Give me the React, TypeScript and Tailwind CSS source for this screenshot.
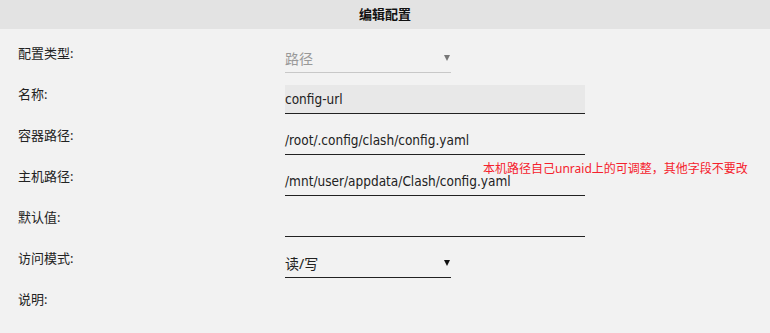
import React from 'react';

const font = { fontFamily: '"Noto Sans", "Noto Sans CJK SC", sans-serif' };
const inputFont = { fontFamily: '"DejaVu Sans Condensed", "Noto Sans CJK SC", sans-serif' };

function Arrow({ dim }: { dim?: boolean }) {
  return (
    <svg width="6" height="6" viewBox="0 0 6 6" className="mr-[1px]">
      <path d="M0 0 H6 L3 6 Z" fill={dim ? '#777' : '#111'} />
    </svg>
  );
}

function Row({ label, children }: { label: string; children?: React.ReactNode }) {
  return (
    <div className="flex items-start h-[41px]">
      <div className="w-[285px] pl-[18px] text-[13px] leading-[20px] text-[#222]">{label}:</div>
      {children}
    </div>
  );
}

export default function App() {
  return (
    <div className="w-[770px] h-[333px] bg-[#f2f2f2] overflow-hidden relative" style={font}>
      <div className="h-[29px] bg-[#e3e3e3] flex items-center justify-center text-[13px] font-bold text-[#111]">
        编辑配置
      </div>

      <div className="pt-[14px]">
        <Row label="配置类型">
          <div className="mt-[1px] w-[166px] h-[29px] border-b border-[#c8c8c8] flex items-center justify-between text-[14px] text-[#999]">
            <span>路径</span>
            <Arrow dim />
          </div>
        </Row>
        <Row label="名称">
          <div className="mt-[1px] w-[300px] h-[29px] bg-[#e8e8e8] border-b border-[#222] flex items-center text-[13.5px] text-[#222]" style={inputFont}>
            config-url
          </div>
        </Row>
        <Row label="容器路径">
          <div className="mt-[1px] w-[300px] h-[29px] border-b border-[#222] flex items-center text-[13.5px] text-[#222]" style={inputFont}>
            /root/.config/clash/config.yaml
          </div>
        </Row>
        <Row label="主机路径">
          <div className="mt-[1px] w-[300px] h-[29px] border-b border-[#222] flex items-center text-[13.5px] text-[#222]" style={inputFont}>
            /mnt/user/appdata/Clash/config.yaml
          </div>
        </Row>
        <Row label="默认值">
          <div className="mt-[1px] w-[300px] h-[29px] border-b border-[#222]" />
        </Row>
        <Row label="访问模式">
          <div className="mt-[1px] w-[166px] h-[29px] border-b border-[#222] flex items-center justify-between text-[14px] text-[#222]">
            <span>读/写</span>
            <Arrow />
          </div>
        </Row>
        <Row label="说明" />
      </div>

      <div className="absolute left-[483px] top-[160px] text-[12px] leading-[18px] text-[#f5222d]">
        本机路径自己unraid上的可调整，其他字段不要改
      </div>
    </div>
  );
}
